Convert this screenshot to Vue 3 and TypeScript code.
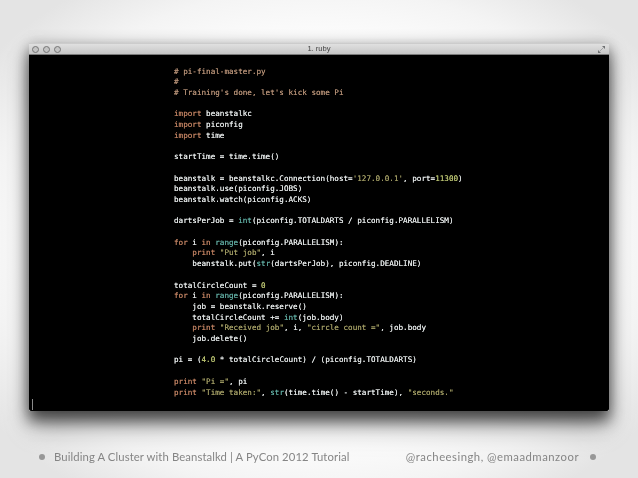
<script setup lang="ts">
type Seg = { t: string; c?: string }
const k = (t: string): Seg => ({ t, c: 'kw' })
const b = (t: string): Seg => ({ t, c: 'bi' })
const s = (t: string): Seg => ({ t, c: 'st' })
const n = (t: string): Seg => ({ t, c: 'nu' })
const c = (t: string): Seg => ({ t, c: 'cm' })
const p = (t: string): Seg => ({ t })

const lines: Seg[][] = [
  [c('# pi-final-master.py')],
  [c('#')],
  [c("# Training's done, let's kick some Pi")],
  [],
  [k('import'), p(' beanstalkc')],
  [k('import'), p(' piconfig')],
  [k('import'), p(' time')],
  [],
  [p('startTime = time.time()')],
  [],
  [p('beanstalk = beanstalkc.Connection(host='), s("'127.0.0.1'"), p(', port='), n('11300'), p(')')],
  [p('beanstalk.use(piconfig.JOBS)')],
  [p('beanstalk.watch(piconfig.ACKS)')],
  [],
  [p('dartsPerJob = '), b('int'), p('(piconfig.TOTALDARTS / piconfig.PARALLELISM)')],
  [],
  [k('for'), p(' i '), k('in'), p(' '), b('range'), p('(piconfig.PARALLELISM):')],
  [p('    '), k('print'), p(' '), s('"Put job"'), p(', i')],
  [p('    beanstalk.put('), b('str'), p('(dartsPerJob), piconfig.DEADLINE)')],
  [],
  [p('totalCircleCount = '), n('0')],
  [k('for'), p(' i '), k('in'), p(' '), b('range'), p('(piconfig.PARALLELISM):')],
  [p('    job = beanstalk.reserve()')],
  [p('    totalCircleCount += '), b('int'), p('(job.body)')],
  [p('    '), k('print'), p(' '), s('"Received job"'), p(', i, '), s('"circle count ="'), p(', job.body')],
  [p('    job.delete()')],
  [],
  [p('pi = ('), n('4.0'), p(' * totalCircleCount) / (piconfig.TOTALDARTS)')],
  [],
  [k('print'), p(' '), s('"Pi ="'), p(', pi')],
  [k('print'), p(' '), s('"Time taken:"'), p(', '), b('str'), p('(time.time() - startTime), '), s('"seconds."')],
]
</script>

<template>
  <div class="slide">
    <section class="window">
      <header class="titlebar">
        <div class="lights">
          <span class="light"></span>
          <span class="light"></span>
          <span class="light"></span>
        </div>
        <span class="title">1. ruby</span>
        <svg class="resize" width="9" height="9" viewBox="0 0 9 9">
          <path d="M1 8 L1 5 L4 8 Z M8 1 L8 4 L5 1 Z" fill="#6f7172" />
          <path d="M3 6 L6 3" stroke="#a2a4a5" stroke-width="1" />
        </svg>
      </header>
      <div class="terminal">
        <pre class="code"><code><span v-for="(line, i) in lines" :key="i" class="line"><span v-for="(seg, j) in line" :key="j" :class="seg.c">{{ seg.t }}</span></span></code></pre>
        <span class="cursor"></span>
      </div>
    </section>
    <footer class="footer">
      <span class="dot"></span>
      <span class="foot-title">Building A Cluster with Beanstalkd | A PyCon 2012 Tutorial</span>
      <span class="foot-authors">@racheesingh, @emaadmanzoor</span>
      <span class="dot"></span>
    </footer>
  </div>
</template>

<style scoped>
.slide {
  width: 638px;
  height: 478px;
  box-sizing: border-box;
  padding: 43px 29px 0;
  overflow: hidden;
  background: radial-gradient(ellipse 64% 64% at 50% 50%, #ffffff 60%, #f4f4f4 82%, #e4e4e4 100%);
  display: flex;
  flex-direction: column;
}
.window {
  height: 368px;
  display: flex;
  flex-direction: column;
  flex: none;
  box-shadow: 0 9px 14px 1px rgba(0, 0, 0, 0.62), 0 18px 26px -2px rgba(0, 0, 0, 0.28), 0 -3px 12px rgba(0, 0, 0, 0.1);
}
.titlebar {
  height: 12px;
  flex: none;
  padding: 0 3px 0 3px;
  display: flex;
  align-items: center;
  position: relative;
  background: linear-gradient(#e0e0e0, #c6c6c6);
  border-top: 1px solid #cccccc;
  border-bottom: 1px solid #7a7a7a;
  box-sizing: border-box;
}
.lights {
  display: flex;
  gap: 4px;
  filter: blur(0.4px);
}
.light {
  width: 7px;
  height: 7px;
  border-radius: 50%;
  background: #c4c4c4;
  border: 1px solid #747474;
  box-sizing: border-box;
}
.title {
  position: absolute;
  left: 0;
  right: 0;
  top: 0;
  text-align: center;
  font: 7.6px/10px "Liberation Sans", sans-serif;
  color: #444;
  filter: blur(0.35px);
}
.resize {
  margin-left: auto;
  filter: blur(0.4px);
}
.terminal {
  flex: 1;
  background: #000;
  position: relative;
  border-radius: 0 0 2px 2px;
}
.code {
  margin: 11.5px 0 0 145px;
  font: 7.62px/10.71px "DejaVu Sans Mono", monospace;
  color: #e2e6e6;
  white-space: pre;
  text-shadow: 0 0 0.5px currentColor;
  filter: blur(0.35px);
}
.line {
  display: block;
  height: 10.71px;
}
.kw { color: #b97d5e; }
.cm { color: #b08c72; }
.bi { color: #5da79d; }
.st { color: #9f9a62; }
.nu { color: #b6bf6e; }
.cursor {
  position: absolute;
  left: 3px;
  bottom: 1px;
  width: 1px;
  height: 11px;
  background: #8a8a8a;
}
.footer {
  margin-top: 38px;
  margin-left: 10px;
  margin-right: 13px;
  display: flex;
  align-items: center;
  color: #858585;
  font: 11.3px/16px "Lato", "Liberation Sans", sans-serif;
  filter: blur(0.3px);
}
.dot {
  width: 6px;
  height: 6px;
  border-radius: 50%;
  background: #979797;
  flex: none;
}
.foot-title {
  margin-left: 9px;
  letter-spacing: 0.1px;
  white-space: nowrap;
}
.foot-authors {
  margin-left: auto;
  margin-right: 11px;
  letter-spacing: 0.5px;
  white-space: nowrap;
}
</style>

<style>
html, body {
  margin: 0;
  background: #fff;
}
</style>
